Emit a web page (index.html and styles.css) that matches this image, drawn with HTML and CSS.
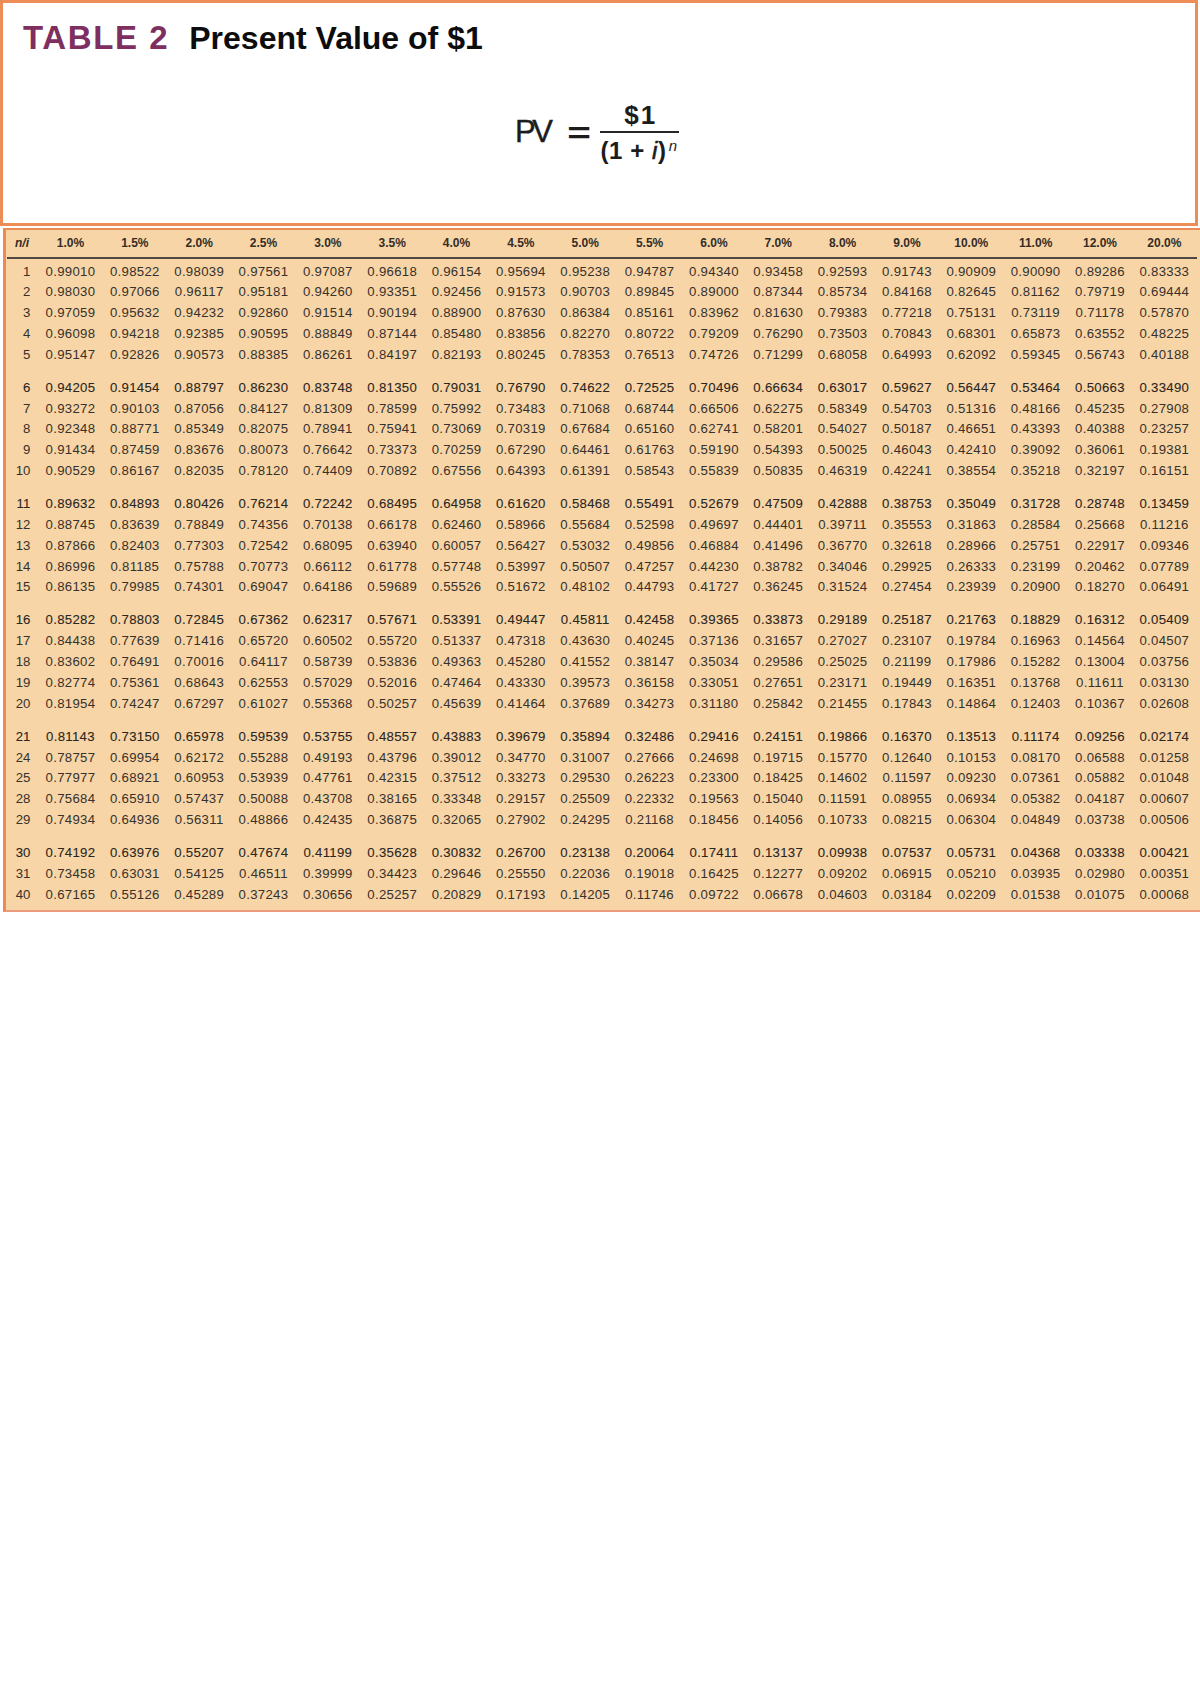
FILE: index.html
```html
<!DOCTYPE html>
<html lang="en">
<head>
<meta charset="utf-8">
<title>TABLE 2 Present Value of $1</title>
<link rel="stylesheet" href="styles.css">
</head>
<body>
<div class="head">
  <div class="title"><span class="title-num">TABLE 2</span><span class="title-text">Present Value of $1</span></div>
  <div class="formula">
    <span class="pv">PV</span>
    <span class="eq">=</span>
    <span class="frac">
      <span class="num">$1</span>
      <span class="den">(1 + <i>i</i>)<sup>n</sup></span>
    </span>
  </div>
</div>
<div class="table-wrap">
<table>
<colgroup><col class="c-n"><col span="18" class="c-v"></colgroup>
<thead>
<tr><th class="ni">n/i</th><th>1.0%</th><th>1.5%</th><th>2.0%</th><th>2.5%</th><th>3.0%</th><th>3.5%</th><th>4.0%</th><th>4.5%</th><th>5.0%</th><th>5.5%</th><th>6.0%</th><th>7.0%</th><th>8.0%</th><th>9.0%</th><th>10.0%</th><th>11.0%</th><th>12.0%</th><th>20.0%</th></tr>
</thead>
<tbody class="g1">
<tr><td class="n">1</td><td>0.99010</td><td>0.98522</td><td>0.98039</td><td>0.97561</td><td>0.97087</td><td>0.96618</td><td>0.96154</td><td>0.95694</td><td>0.95238</td><td>0.94787</td><td>0.94340</td><td>0.93458</td><td>0.92593</td><td>0.91743</td><td>0.90909</td><td>0.90090</td><td>0.89286</td><td>0.83333</td></tr>
<tr><td class="n">2</td><td>0.98030</td><td>0.97066</td><td>0.96117</td><td>0.95181</td><td>0.94260</td><td>0.93351</td><td>0.92456</td><td>0.91573</td><td>0.90703</td><td>0.89845</td><td>0.89000</td><td>0.87344</td><td>0.85734</td><td>0.84168</td><td>0.82645</td><td>0.81162</td><td>0.79719</td><td>0.69444</td></tr>
<tr><td class="n">3</td><td>0.97059</td><td>0.95632</td><td>0.94232</td><td>0.92860</td><td>0.91514</td><td>0.90194</td><td>0.88900</td><td>0.87630</td><td>0.86384</td><td>0.85161</td><td>0.83962</td><td>0.81630</td><td>0.79383</td><td>0.77218</td><td>0.75131</td><td>0.73119</td><td>0.71178</td><td>0.57870</td></tr>
<tr><td class="n">4</td><td>0.96098</td><td>0.94218</td><td>0.92385</td><td>0.90595</td><td>0.88849</td><td>0.87144</td><td>0.85480</td><td>0.83856</td><td>0.82270</td><td>0.80722</td><td>0.79209</td><td>0.76290</td><td>0.73503</td><td>0.70843</td><td>0.68301</td><td>0.65873</td><td>0.63552</td><td>0.48225</td></tr>
<tr><td class="n">5</td><td>0.95147</td><td>0.92826</td><td>0.90573</td><td>0.88385</td><td>0.86261</td><td>0.84197</td><td>0.82193</td><td>0.80245</td><td>0.78353</td><td>0.76513</td><td>0.74726</td><td>0.71299</td><td>0.68058</td><td>0.64993</td><td>0.62092</td><td>0.59345</td><td>0.56743</td><td>0.40188</td></tr>
</tbody>
<tbody>
<tr><td class="n">6</td><td>0.94205</td><td>0.91454</td><td>0.88797</td><td>0.86230</td><td>0.83748</td><td>0.81350</td><td>0.79031</td><td>0.76790</td><td>0.74622</td><td>0.72525</td><td>0.70496</td><td>0.66634</td><td>0.63017</td><td>0.59627</td><td>0.56447</td><td>0.53464</td><td>0.50663</td><td>0.33490</td></tr>
<tr><td class="n">7</td><td>0.93272</td><td>0.90103</td><td>0.87056</td><td>0.84127</td><td>0.81309</td><td>0.78599</td><td>0.75992</td><td>0.73483</td><td>0.71068</td><td>0.68744</td><td>0.66506</td><td>0.62275</td><td>0.58349</td><td>0.54703</td><td>0.51316</td><td>0.48166</td><td>0.45235</td><td>0.27908</td></tr>
<tr><td class="n">8</td><td>0.92348</td><td>0.88771</td><td>0.85349</td><td>0.82075</td><td>0.78941</td><td>0.75941</td><td>0.73069</td><td>0.70319</td><td>0.67684</td><td>0.65160</td><td>0.62741</td><td>0.58201</td><td>0.54027</td><td>0.50187</td><td>0.46651</td><td>0.43393</td><td>0.40388</td><td>0.23257</td></tr>
<tr><td class="n">9</td><td>0.91434</td><td>0.87459</td><td>0.83676</td><td>0.80073</td><td>0.76642</td><td>0.73373</td><td>0.70259</td><td>0.67290</td><td>0.64461</td><td>0.61763</td><td>0.59190</td><td>0.54393</td><td>0.50025</td><td>0.46043</td><td>0.42410</td><td>0.39092</td><td>0.36061</td><td>0.19381</td></tr>
<tr><td class="n">10</td><td>0.90529</td><td>0.86167</td><td>0.82035</td><td>0.78120</td><td>0.74409</td><td>0.70892</td><td>0.67556</td><td>0.64393</td><td>0.61391</td><td>0.58543</td><td>0.55839</td><td>0.50835</td><td>0.46319</td><td>0.42241</td><td>0.38554</td><td>0.35218</td><td>0.32197</td><td>0.16151</td></tr>
</tbody>
<tbody>
<tr><td class="n">11</td><td>0.89632</td><td>0.84893</td><td>0.80426</td><td>0.76214</td><td>0.72242</td><td>0.68495</td><td>0.64958</td><td>0.61620</td><td>0.58468</td><td>0.55491</td><td>0.52679</td><td>0.47509</td><td>0.42888</td><td>0.38753</td><td>0.35049</td><td>0.31728</td><td>0.28748</td><td>0.13459</td></tr>
<tr><td class="n">12</td><td>0.88745</td><td>0.83639</td><td>0.78849</td><td>0.74356</td><td>0.70138</td><td>0.66178</td><td>0.62460</td><td>0.58966</td><td>0.55684</td><td>0.52598</td><td>0.49697</td><td>0.44401</td><td>0.39711</td><td>0.35553</td><td>0.31863</td><td>0.28584</td><td>0.25668</td><td>0.11216</td></tr>
<tr><td class="n">13</td><td>0.87866</td><td>0.82403</td><td>0.77303</td><td>0.72542</td><td>0.68095</td><td>0.63940</td><td>0.60057</td><td>0.56427</td><td>0.53032</td><td>0.49856</td><td>0.46884</td><td>0.41496</td><td>0.36770</td><td>0.32618</td><td>0.28966</td><td>0.25751</td><td>0.22917</td><td>0.09346</td></tr>
<tr><td class="n">14</td><td>0.86996</td><td>0.81185</td><td>0.75788</td><td>0.70773</td><td>0.66112</td><td>0.61778</td><td>0.57748</td><td>0.53997</td><td>0.50507</td><td>0.47257</td><td>0.44230</td><td>0.38782</td><td>0.34046</td><td>0.29925</td><td>0.26333</td><td>0.23199</td><td>0.20462</td><td>0.07789</td></tr>
<tr><td class="n">15</td><td>0.86135</td><td>0.79985</td><td>0.74301</td><td>0.69047</td><td>0.64186</td><td>0.59689</td><td>0.55526</td><td>0.51672</td><td>0.48102</td><td>0.44793</td><td>0.41727</td><td>0.36245</td><td>0.31524</td><td>0.27454</td><td>0.23939</td><td>0.20900</td><td>0.18270</td><td>0.06491</td></tr>
</tbody>
<tbody>
<tr><td class="n">16</td><td>0.85282</td><td>0.78803</td><td>0.72845</td><td>0.67362</td><td>0.62317</td><td>0.57671</td><td>0.53391</td><td>0.49447</td><td>0.45811</td><td>0.42458</td><td>0.39365</td><td>0.33873</td><td>0.29189</td><td>0.25187</td><td>0.21763</td><td>0.18829</td><td>0.16312</td><td>0.05409</td></tr>
<tr><td class="n">17</td><td>0.84438</td><td>0.77639</td><td>0.71416</td><td>0.65720</td><td>0.60502</td><td>0.55720</td><td>0.51337</td><td>0.47318</td><td>0.43630</td><td>0.40245</td><td>0.37136</td><td>0.31657</td><td>0.27027</td><td>0.23107</td><td>0.19784</td><td>0.16963</td><td>0.14564</td><td>0.04507</td></tr>
<tr><td class="n">18</td><td>0.83602</td><td>0.76491</td><td>0.70016</td><td>0.64117</td><td>0.58739</td><td>0.53836</td><td>0.49363</td><td>0.45280</td><td>0.41552</td><td>0.38147</td><td>0.35034</td><td>0.29586</td><td>0.25025</td><td>0.21199</td><td>0.17986</td><td>0.15282</td><td>0.13004</td><td>0.03756</td></tr>
<tr><td class="n">19</td><td>0.82774</td><td>0.75361</td><td>0.68643</td><td>0.62553</td><td>0.57029</td><td>0.52016</td><td>0.47464</td><td>0.43330</td><td>0.39573</td><td>0.36158</td><td>0.33051</td><td>0.27651</td><td>0.23171</td><td>0.19449</td><td>0.16351</td><td>0.13768</td><td>0.11611</td><td>0.03130</td></tr>
<tr><td class="n">20</td><td>0.81954</td><td>0.74247</td><td>0.67297</td><td>0.61027</td><td>0.55368</td><td>0.50257</td><td>0.45639</td><td>0.41464</td><td>0.37689</td><td>0.34273</td><td>0.31180</td><td>0.25842</td><td>0.21455</td><td>0.17843</td><td>0.14864</td><td>0.12403</td><td>0.10367</td><td>0.02608</td></tr>
</tbody>
<tbody>
<tr><td class="n">21</td><td>0.81143</td><td>0.73150</td><td>0.65978</td><td>0.59539</td><td>0.53755</td><td>0.48557</td><td>0.43883</td><td>0.39679</td><td>0.35894</td><td>0.32486</td><td>0.29416</td><td>0.24151</td><td>0.19866</td><td>0.16370</td><td>0.13513</td><td>0.11174</td><td>0.09256</td><td>0.02174</td></tr>
<tr><td class="n">24</td><td>0.78757</td><td>0.69954</td><td>0.62172</td><td>0.55288</td><td>0.49193</td><td>0.43796</td><td>0.39012</td><td>0.34770</td><td>0.31007</td><td>0.27666</td><td>0.24698</td><td>0.19715</td><td>0.15770</td><td>0.12640</td><td>0.10153</td><td>0.08170</td><td>0.06588</td><td>0.01258</td></tr>
<tr><td class="n">25</td><td>0.77977</td><td>0.68921</td><td>0.60953</td><td>0.53939</td><td>0.47761</td><td>0.42315</td><td>0.37512</td><td>0.33273</td><td>0.29530</td><td>0.26223</td><td>0.23300</td><td>0.18425</td><td>0.14602</td><td>0.11597</td><td>0.09230</td><td>0.07361</td><td>0.05882</td><td>0.01048</td></tr>
<tr><td class="n">28</td><td>0.75684</td><td>0.65910</td><td>0.57437</td><td>0.50088</td><td>0.43708</td><td>0.38165</td><td>0.33348</td><td>0.29157</td><td>0.25509</td><td>0.22332</td><td>0.19563</td><td>0.15040</td><td>0.11591</td><td>0.08955</td><td>0.06934</td><td>0.05382</td><td>0.04187</td><td>0.00607</td></tr>
<tr><td class="n">29</td><td>0.74934</td><td>0.64936</td><td>0.56311</td><td>0.48866</td><td>0.42435</td><td>0.36875</td><td>0.32065</td><td>0.27902</td><td>0.24295</td><td>0.21168</td><td>0.18456</td><td>0.14056</td><td>0.10733</td><td>0.08215</td><td>0.06304</td><td>0.04849</td><td>0.03738</td><td>0.00506</td></tr>
</tbody>
<tbody>
<tr><td class="n">30</td><td>0.74192</td><td>0.63976</td><td>0.55207</td><td>0.47674</td><td>0.41199</td><td>0.35628</td><td>0.30832</td><td>0.26700</td><td>0.23138</td><td>0.20064</td><td>0.17411</td><td>0.13137</td><td>0.09938</td><td>0.07537</td><td>0.05731</td><td>0.04368</td><td>0.03338</td><td>0.00421</td></tr>
<tr><td class="n">31</td><td>0.73458</td><td>0.63031</td><td>0.54125</td><td>0.46511</td><td>0.39999</td><td>0.34423</td><td>0.29646</td><td>0.25550</td><td>0.22036</td><td>0.19018</td><td>0.16425</td><td>0.12277</td><td>0.09202</td><td>0.06915</td><td>0.05210</td><td>0.03935</td><td>0.02980</td><td>0.00351</td></tr>
<tr><td class="n">40</td><td>0.67165</td><td>0.55126</td><td>0.45289</td><td>0.37243</td><td>0.30656</td><td>0.25257</td><td>0.20829</td><td>0.17193</td><td>0.14205</td><td>0.11746</td><td>0.09722</td><td>0.06678</td><td>0.04603</td><td>0.03184</td><td>0.02209</td><td>0.01538</td><td>0.01075</td><td>0.00068</td></tr>
</tbody>
</table>
</div>
</body>
</html>
```

FILE: styles.css
```css
* { box-sizing: border-box; }

html, body {
  margin: 0;
  padding: 0;
  background: #ffffff;
}

body {
  width: 1200px;
  font-family: "Liberation Sans", Arial, sans-serif;
  color: #111111;
}

/* ---------- header box ---------- */
.head {
  height: 226px;
  margin-right: 2px;
  border: 3px solid #ec8c57;
  background: #ffffff;
}

.title {
  display: flex;
  align-items: baseline;
  padding: 17px 0 0 20px;
  font-size: 32px;
  line-height: 36px;
  font-weight: 700;
}

.title-num {
  color: #7e2f60;
  font-size: 33px;
  letter-spacing: 1.6px;
}

.title-text {
  margin-left: 20px;
  color: #0d0d0d;
}

.formula {
  display: flex;
  justify-content: center;
  align-items: center;
  margin-top: 46px;
  padding-right: 4px;
  color: #1c1c1c;
}

.pv {
  font-size: 31px;
  line-height: 30px;
  letter-spacing: -3.5px;
  margin-right: 19px;
  margin-bottom: 2px;
  -webkit-text-stroke: 0.4px #1c1c1c;
}

.eq {
  display: inline-block;
  width: 22px;
  text-align: center;
  font-size: 30px;
  line-height: 30px;
  font-weight: 700;
  transform: scaleX(1.35);
  margin-right: 10px;
}

.frac {
  display: inline-flex;
  flex-direction: column;
  align-items: stretch;
}

.num {
  display: block;
  text-align: center;
  font-size: 26px;
  line-height: 26px;
  font-weight: 700;
  letter-spacing: 2px;
  padding: 0 0 3px 2px;
}

.den {
  display: block;
  font-size: 24px;
  line-height: 26px;
  font-weight: 700;
  letter-spacing: 0.6px;
  border-top: 2px solid #262626;
  padding: 5.4px 2px 0 0;
}

.den i {
  font-style: italic;
  font-weight: 400;
  -webkit-text-stroke: 0.6px #1c1c1c;
}

.den sup {
  font-size: 15px;
  line-height: 15px;
  font-weight: 400;
  font-style: italic;
  vertical-align: top;
  letter-spacing: 0;
  margin-left: 2px;
}

/* ---------- table ---------- */
.table-wrap {
  margin-top: 2px;
  margin-left: 3px;
  border-top: 2px solid #ea8a54;
  border-left: 3px solid #ea8a54;
  border-bottom: 2px solid #eb9a7c;
  background: #f8d5a6;
  padding: 0 3px 4.6px 1px;
}

table {
  border-collapse: separate;
  border-spacing: 0;
  table-layout: fixed;
  width: 1189.6px;
}

col.c-n { width: 31.3px; }
col.c-v { width: 64.35px; }

th {
  font-size: 12px;
  font-weight: 700;
  line-height: 27px;
  padding: 0;
  text-align: center;
  border-bottom: 2px solid #4f4741;
  color: #332d28;
  white-space: nowrap;
}

th.ni {
  text-align: left;
  padding-left: 8px;
  font-style: italic;
}

td {
  font-size: 13.2px;
  line-height: 20.8px;
  padding: 0;
  text-align: center;
  color: #36312c;
  letter-spacing: 0.3px;
  white-space: nowrap;
}

td.n {
  text-align: right;
  padding-right: 8px;
  letter-spacing: 0;
}

tbody tr:first-child td {
  padding-top: 12.3px;
  color: #2a2622;
  -webkit-text-stroke: 0.1px #2a2622;
}

tbody.g1 tr:first-child td {
  padding-top: 2.6px;
  color: #36312c;
  -webkit-text-stroke: 0;
}
```
